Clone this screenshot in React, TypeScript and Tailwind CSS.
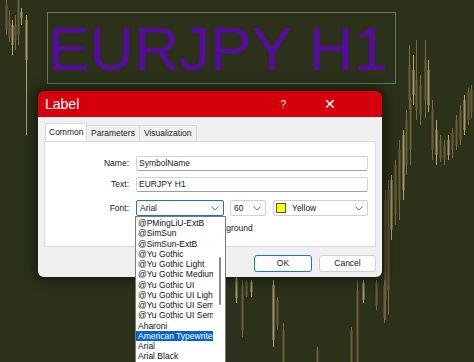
import React from 'react';

// candles: [x, wickTop, wickBottom, bodyTop, bodyBottom, light]
type Candle = [number, number, number, number, number, boolean?];

const candles: Candle[] = [
  // top left
  [6, 0, 35, 5, 30],
  [9, 10, 42, 20, 38],
  [12, 20, 55, 25, 45, true],
  [15, 15, 50, 25, 40],
  [18, 0, 45, 0, 35],
  [21, 8, 25, 12, 18, true],
  [26, 15, 135, 20, 60, true],
  // top right
  [409, 45, 110, 65, 100],
  [413, 55, 105, 70, 95, true],
  [416, 40, 120, 80, 110],
  [420, 75, 125, 85, 115],
  [425, 40, 118, 60, 100],
  [428, 60, 112, 70, 105, true],
  [432, 100, 160, 110, 150],
  [436, 120, 165, 130, 155, true],
  [440, 135, 162, 140, 158],
  [444, 140, 165, 145, 160],
  [448, 135, 160, 140, 155, true],
  [452, 128, 158, 133, 150],
  [456, 115, 150, 120, 145],
  [460, 105, 145, 110, 140],
  [464, 95, 135, 100, 130, true],
  [468, 88, 125, 92, 120],
  [471, 85, 118, 90, 112],
  // rising leg on right
  [385, 190, 320, 200, 300],
  [388, 180, 315, 190, 290],
  [391, 175, 240, 180, 230, true],
  [395, 160, 225, 165, 215],
  [399, 140, 220, 150, 200],
  [403, 130, 200, 135, 190, true],
  [406, 110, 175, 120, 165],
  [410, 97, 165, 100, 150],
  // bottom
  [242, 280, 337, 285, 330],
  [246, 280, 297, 282, 295],
  [251, 280, 297, 282, 292, true],
  [273, 280, 347, 285, 340, true],
  [277, 297, 330, 300, 325],
  [283, 323, 362, 330, 362],
  [317, 347, 362, 350, 362],
  [351, 327, 362, 330, 362],
  [357, 280, 362, 290, 362],
  [363, 280, 303, 283, 300, true],
  [376, 280, 310, 283, 305],
  [384, 280, 323, 285, 318],
  [236, 273, 303, 278, 298, true],
];

const fonts = [
  '@PMingLiU-ExtB',
  '@SimSun',
  '@SimSun-ExtB',
  '@Yu Gothic',
  '@Yu Gothic Light',
  '@Yu Gothic Medium',
  '@Yu Gothic UI',
  '@Yu Gothic UI Light',
  '@Yu Gothic UI Semibold',
  '@Yu Gothic UI Semilight',
  'Aharoni',
  'American Typewriter',
  'Arial',
  'Arial Black',
];

const Chevron = () => (
  <svg width="8" height="5" viewBox="0 0 8 5" className="shrink-0">
    <path d="M0.5 0.5 L4 4 L7.5 0.5" fill="none" stroke="#6b6b6b" strokeWidth="0.9" />
  </svg>
);

function Field({ label, value }: { label: string; value: string }) {
  return (
    <div className="flex items-center h-[15px]">
      <div className="w-[91px] pr-[7px] text-right text-[#222]">{label}</div>
      <div className="flex-1 h-full bg-white border border-[#d4d4d4] border-b-[#a0a0a0] rounded-[2px] px-[2px] flex items-center">
        {value}
      </div>
    </div>
  );
}

export default function App() {
  return (
    <div className="relative w-[474px] h-[362px] overflow-hidden bg-[#2b3219]">
      {/* chart candles */}
      <svg className="absolute inset-0" width="474" height="362">
        {candles.map(([x, wt, wb, bt, bb, light], i) => (
          <g key={i}>
            <line x1={x + 0.5} y1={wt} x2={x + 0.5} y2={wb} stroke={light ? '#b5a47c' : '#7c6b44'} strokeWidth="1" />
            <rect x={x - 0.5} y={bt} width="2" height={bb - bt} fill={light ? '#a8966a' : '#6c5d3a'} />
          </g>
        ))}
      </svg>

      {/* label object on the chart */}
      <div className="absolute left-[47px] top-[12px] w-[349px] h-[72px] border border-[#5f7d5c] flex items-center">
        <span className="text-[62px] leading-none text-[#560c9f] mt-[2px]" style={{ fontFamily: '"Liberation Sans", Arial, sans-serif' }}>
          EURJPY H1
        </span>
      </div>

      {/* dialog */}
      <div
        className="absolute left-[38px] top-[91px] w-[344px] h-[186px] rounded-[6px] flex flex-col shadow-[0_0_12px_4px_rgba(10,12,5,0.6)]"
        style={{ fontFamily: '"Liberation Sans", Arial, sans-serif' }}
      >
        <div className="h-[27px] bg-[#d6000d] rounded-t-[6px] flex items-center pl-[7px] text-white">
          <span className="text-[14px]">Label</span>
          <span className="ml-auto text-[10px] mr-[38px]">?</span>
          <span className="text-[14px] font-light mr-[46px] leading-none">✕</span>
        </div>
        <div className="flex-1 bg-[#f0f0f0] rounded-b-[6px] flex flex-col px-[6px] pb-[5px] text-[8.5px] text-[#1a1a1a]">
          {/* tabs */}
          <div className="flex items-end h-[24px] pl-[1px]">
            <div className="h-[18px] px-[3px] bg-white border border-b-0 border-[#d9d9d9] flex items-center w-[42px]">Common</div>
            <div className="h-[16px] px-[4px] bg-[#f0f0f0] border-t border-r border-[#d9d9d9] flex items-center">Parameters</div>
            <div className="h-[16px] px-[4px] bg-[#f0f0f0] border-t border-r border-[#d9d9d9] flex items-center">Visualization</div>
          </div>
          {/* panel */}
          <div className="h-[106px] bg-white border border-[#d9d9d9] pt-[14px] pr-[7px] flex flex-col gap-[6px]">
            <Field label="Name:" value="SymbolName" />
            <Field label="Text:" value="EURJPY H1" />
            <div className="flex items-center h-[16px] mt-[2px]">
              <div className="w-[91px] pr-[7px] text-right text-[#222]">Font:</div>
              <div className="relative w-[88px] h-full border border-[#1b74c6] bg-white rounded-[2px] flex items-center pl-[3px] pr-[4px]">
                <span>Arial</span>
                <span className="ml-auto"><Chevron /></span>
                {/* open list */}
                <div className="absolute left-[-2px] top-[15px] w-[91px] h-[160px] bg-white border border-[#7a7a7a] overflow-hidden z-10 pt-[1px]">
                  <div className="w-[77px] overflow-hidden">
                    {fonts.map((f) => (
                      <div
                        key={f}
                        className={
                          'h-[10.26px] leading-[10.26px] whitespace-nowrap pl-[2px] text-[8.5px] ' +
                          (f === 'American Typewriter' ? 'bg-[#0a62c9] text-white' : 'text-[#111]')
                        }
                      >
                        {f}
                      </div>
                    ))}
                  </div>
                  <div className="absolute left-[83px] top-[40px] w-[2px] h-[48px] bg-[#8a8a8a] rounded-full" />
                </div>
              </div>
              <div className="ml-[6px] w-[36px] h-full border border-[#cfcfcf] bg-white rounded-[2px] flex items-center pl-[3px] pr-[4px]">
                <span>60</span>
                <span className="ml-auto"><Chevron /></span>
              </div>
              <div className="ml-[7px] flex-1 h-full border border-[#cfcfcf] bg-white rounded-[2px] flex items-center pl-[2px] pr-[4px]">
                <span className="w-[10px] h-[10px] bg-[#ffff00] border border-[#555]" />
                <span className="ml-[6px]">Yellow</span>
                <span className="ml-auto"><Chevron /></span>
              </div>
            </div>
            <div className="flex items-center h-[12px] pl-[137px]">
              <span className="w-[9px] h-[9px] border border-[#555] bg-white mr-[4px]" />
              <span>Fill background</span>
            </div>
          </div>
          {/* buttons */}
          <div className="flex justify-end gap-[7px] mt-[8px]">
            <div className="w-[58px] h-[17px] rounded-[3px] border border-[#1b74c6] bg-[#fdfdfd] flex items-center justify-center">OK</div>
            <div className="w-[57px] h-[17px] rounded-[3px] border border-[#d0d0d0] bg-[#fdfdfd] flex items-center justify-center">Cancel</div>
          </div>
        </div>
      </div>
    </div>
  );
}
